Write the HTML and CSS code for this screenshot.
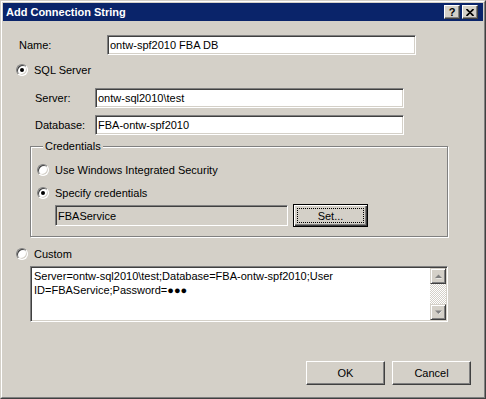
FILE: index.html
```html
<!DOCTYPE html>
<html lang="en">
<head>
    <meta charset="UTF-8">
    <title>Add Connection String</title>
    <link rel="stylesheet" href="styles.css">
</head>
<body>

<div class="window">
  <div class="frame">
    <div class="titlebar">
      <span class="title">Add Connection String</span>
      <div class="caption-buttons">
        <span class="cap-btn help">?</span>
        <span class="cap-btn">
          <svg width="8" height="7" viewBox="0 0 8 7"><path d="M0.5 0L4 3.5L7.5 0M0.5 7L4 3.5L7.5 7" stroke="#000" stroke-width="1.7" fill="none"/></svg>
        </span>
      </div>
    </div>

    <div class="content">
      <div class="row name-row">
        <span class="name-label">Name:</span>
        <div class="field name-field">ontw-spf2010 FBA DB</div>
      </div>

      <div class="option sql-option">
        <span class="radio"><span class="dot"></span></span>
        <span>SQL Server</span>
      </div>

      <div class="sql-fields">
        <div class="row">
          <span class="server-label">Server:</span>
          <div class="field server-field">ontw-sql2010\test</div>
        </div>
        <div class="row db-row">
          <span class="server-label">Database:</span>
          <div class="field server-field">FBA-ontw-spf2010</div>
        </div>
      </div>

      <fieldset class="group">
        <legend>Credentials</legend>
        <div class="option">
          <span class="radio"></span>
          <span>Use Windows Integrated Security</span>
        </div>
        <div class="option second-option">
          <span class="radio"><span class="dot"></span></span>
          <span>Specify credentials</span>
        </div>
        <div class="cred-row">
          <div class="field disabled cred-field">FBAService</div>
          <button class="btn default set-btn"><span class="focus">Set...</span></button>
        </div>
      </fieldset>

      <div class="option custom-option">
        <span class="radio"></span>
        <span>Custom</span>
      </div>

      <div class="textarea">
        <div class="text">Server=ontw-sql2010\test;Database=FBA-ontw-spf2010;User ID=FBAService;Password=●●●</div>
        <div class="scrollbar">
          <span class="arrow-btn">
            <svg width="7" height="5" viewBox="0 0 7 5"><path d="M1 4.5h6L4 1.5z" fill="#fff"/><path d="M0 4h7L3.5 0.5z" fill="#808080"/></svg>
          </span>
          <span class="track"></span>
          <span class="arrow-btn">
            <svg width="7" height="5" viewBox="0 0 7 5"><path d="M1 1h6L4 4.5z" fill="#fff"/><path d="M0 0.5h7L3.5 4z" fill="#808080"/></svg>
          </span>
        </div>
      </div>

      <div class="footer">
        <button class="btn footer-btn">OK</button>
        <button class="btn footer-btn">Cancel</button>
      </div>
    </div>
  </div>
</div>

</body>
</html>
```

FILE: styles.css
```css
* {
    box-sizing: border-box;
}
body {
    margin: 0;
    background: #d4d0c8;
    font-family: "Liberation Sans", Arial, sans-serif;
    font-size: 11px;
    color: #000;
}
.window {
    width: 486px;
    height: 399px;
    border: 1px solid;
    border-color: #d4d0c8 #404040 #404040 #d4d0c8;
}
.frame {
    height: 100%;
    border: 1px solid;
    border-color: #fff #808080 #808080 #fff;
    padding: 1px;
    display: flex;
    flex-direction: column;
}
.titlebar {
    height: 18px;
    flex: none;
    background: #0a246a;
    color: #fff;
    display: flex;
    align-items: center;
    justify-content: space-between;
    padding: 0 5px 0 3px;
}
.title {
    font-weight: bold;
    font-size: 11px;
}
.caption-buttons {
    display: flex;
    gap: 2px;
}
.cap-btn {
    width: 16px;
    height: 14px;
    background: #d4d0c8;
    border: 1px solid;
    border-color: #fff #404040 #404040 #fff;
    box-shadow: inset -1px -1px #808080;
    display: flex;
    align-items: center;
    justify-content: center;
    color: #000;
}
.help {
    font-weight: bold;
    font-size: 11px;
    line-height: 12px;
}
.content {
    flex: 1;
    display: flex;
    flex-direction: column;
    padding: 14px 12px 11px 13px;
}
.row {
    display: flex;
    align-items: center;
}
.name-label {
    margin-left: 3px;
    width: 88px;
}
.field {
    height: 20px;
    background: #fff;
    border: 1px solid;
    border-color: #808080 #fff #fff #808080;
    box-shadow: inset 1px 1px #404040, inset -1px -1px #d4d0c8;
    padding: 0 2px;
    display: flex;
    align-items: center;
    white-space: nowrap;
}
.name-field {
    width: 309px;
}
.option {
    display: flex;
    align-items: center;
    gap: 6px;
    height: 13px;
}
.radio {
    width: 12px;
    height: 12px;
    flex: none;
    border-radius: 50%;
    background: #fff;
    border: 1px solid;
    border-color: #808080 #fff #fff #808080;
    box-shadow: inset 1px 1px #404040, inset -1px -1px #d4d0c8;
    display: flex;
    align-items: center;
    justify-content: center;
}
.dot {
    width: 4px;
    height: 4px;
    border-radius: 50%;
    background: #000;
}
.sql-option {
    margin-top: 8px;
}
.sql-fields {
    margin: 12px 0 0 19px;
}
.server-label {
    width: 60px;
}
.server-field {
    width: 309px;
}
.db-row {
    margin-top: 7px;
}
.group {
    margin: 5px 0 0 14px;
    width: 418px;
    padding: 10px 6px 9px 6px;
    border: 1px solid #808080;
    box-shadow: 1px 1px 0 #fff, inset 1px 1px 0 #fff;
}
.group legend {
    padding: 0 2px;
    margin-left: 6px;
    line-height: 13px;
    background: #d4d0c8;
}
.second-option {
    margin-top: 10px;
}
.cred-row {
    display: flex;
    align-items: center;
    gap: 5px;
    margin: 5px 0 0 18px;
}
.cred-field {
    width: 233px;
    height: 21px;
}
.disabled {
    background: #d4d0c8;
}
.btn {
    font-family: "Liberation Sans", Arial, sans-serif;
    font-size: 11px;
    color: #000;
    background: #d4d0c8;
    border: 1px solid;
    border-color: #fff #404040 #404040 #fff;
    box-shadow: inset -1px -1px #808080;
    padding: 0;
    display: flex;
    align-items: center;
    justify-content: center;
}
.default {
    border-color: #000;
    box-shadow: inset 1px 1px #fff, inset -1px -1px #404040, inset -2px -2px #808080;
}
.set-btn {
    width: 75px;
    height: 23px;
    padding: 3px;
}
.focus {
    flex: 1;
    align-self: stretch;
    border: 1px dotted #000;
    display: flex;
    align-items: center;
    justify-content: center;
}
.custom-option {
    margin-top: 10px;
}
.textarea {
    margin: 6px 0 0 14px;
    width: 418px;
    height: 56px;
    background: #fff;
    border: 1px solid;
    border-color: #808080 #fff #fff #808080;
    box-shadow: inset 1px 1px #404040, inset -1px -1px #d4d0c8;
    padding: 1px;
    display: flex;
}
.text {
    flex: 1;
    padding: 1px 10px 0 2px;
    line-height: 14px;
}
.scrollbar {
    width: 16px;
    flex: none;
    display: flex;
    flex-direction: column;
}
.arrow-btn {
    height: 16px;
    flex: none;
    background: #d4d0c8;
    border: 1px solid;
    border-color: #d4d0c8 #404040 #404040 #d4d0c8;
    box-shadow: inset 1px 1px #fff, inset -1px -1px #808080;
    display: flex;
    align-items: center;
    justify-content: center;
}
.track {
    flex: 1;
    background: repeating-conic-gradient(#d4d0c8 0 25%, #fff 0 50%) 0 0 / 2px 2px;
}
.footer {
    margin-top: auto;
    display: flex;
    justify-content: flex-end;
    gap: 7px;
}
.footer-btn {
    width: 79px;
    height: 24px;
}
```
